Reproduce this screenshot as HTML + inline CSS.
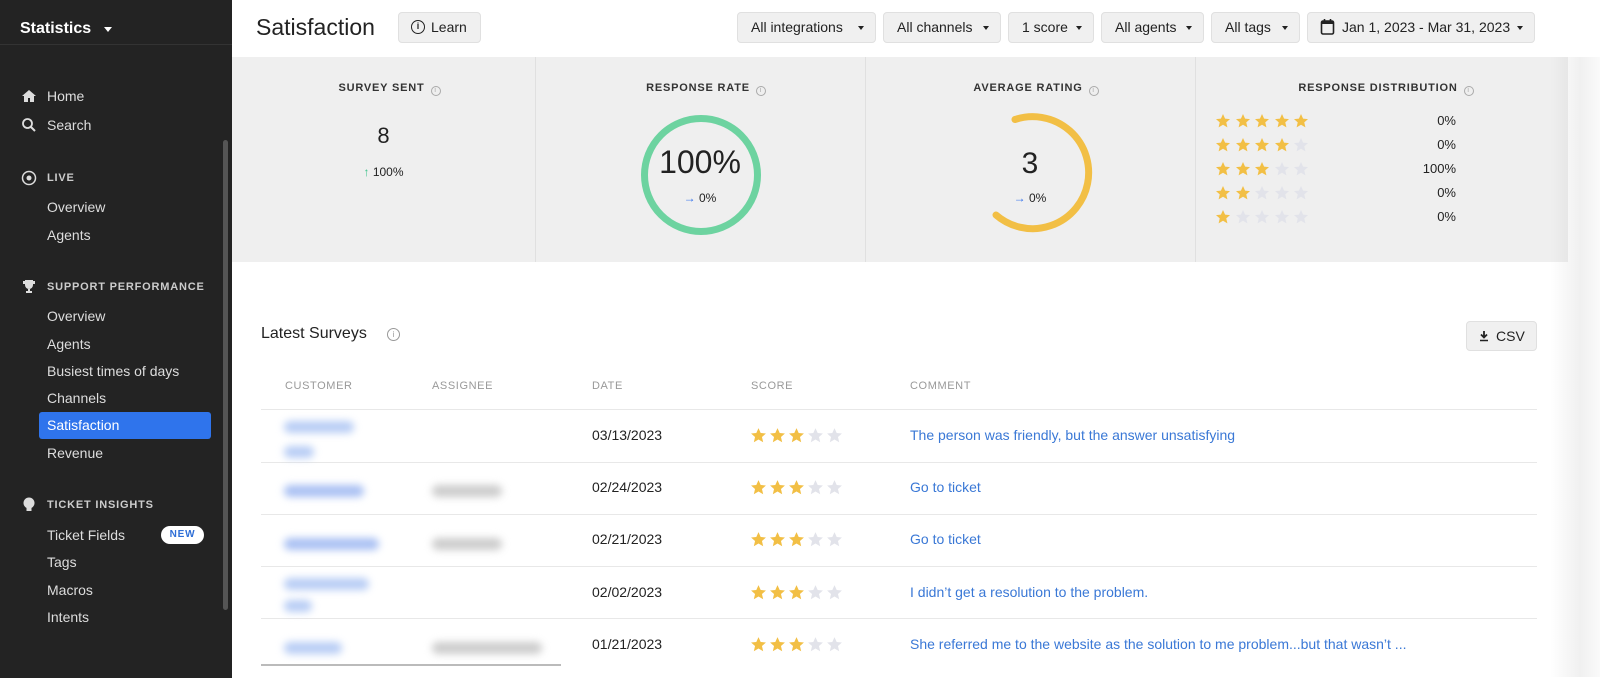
<!DOCTYPE html>
<html><head><meta charset="utf-8"><style>
*{box-sizing:border-box;margin:0;padding:0}
body{width:1600px;height:691px;overflow:hidden;background:#fff;font-family:"Liberation Sans",sans-serif;position:relative;color:#222}
.a{position:absolute}
#sb{left:0;top:0;width:232px;height:678px;background:#232323}
.sbt{color:#fff;font-weight:bold;font-size:16px}
.ni{position:absolute;left:47px;color:#ddd;font-size:14px;line-height:18px}
.sec{position:absolute;left:47px;color:#ccc;font-size:11px;font-weight:bold;letter-spacing:.8px}
.btn{position:absolute;top:12px;height:31px;background:#f0f0f0;border:1px solid #e0e0e0;border-radius:4px;font-size:14px;line-height:29px;padding-left:13px;color:#222}
.btn .c{position:absolute;right:11px;top:13px;border-left:3.5px solid transparent;border-right:3.5px solid transparent;border-top:4px solid #222}
.kt{position:absolute;font-size:11px;font-weight:bold;letter-spacing:.8px;color:#333;top:82px;text-align:center}
.info{display:inline-block;width:10px;height:10px;border:1px solid #aaa;border-radius:50%;vertical-align:-1px;margin-left:6px;font-size:7px;line-height:8px;text-align:center;color:#aaa;font-weight:normal}
.th{position:absolute;top:380px;font-size:11px;color:#999;letter-spacing:.6px}
.hl{position:absolute;left:261px;width:1276px;height:1px;background:#e8e8e8}
.dt{position:absolute;left:592px;font-size:14px;color:#222}
.cm{position:absolute;left:910px;font-size:14px;color:#3a78d6}
.bl{position:absolute;height:12px;border-radius:6px;filter:blur(4px)}
</style></head><body>
<div id="sb" class="a">
 <div class="a sbt" style="left:20px;top:20px">Statistics</div>
 <div class="a" style="left:104px;top:27px;border-left:4px solid transparent;border-right:4px solid transparent;border-top:5px solid #fff"></div>
 <div class="a" style="left:0;top:44px;width:232px;height:1px;background:#333"></div>
 <div class="a" style="left:223px;top:140px;width:5px;height:470px;background:#555;border-radius:3px"></div>
 <svg class="a" style="left:21px;top:88px" width="16" height="16" viewBox="0 0 16 16"><path d="M8 2L1 8h2v6h4v-4h2v4h4V8h2z" fill="#ddd"/></svg>
 <div class="ni" style="top:87px">Home</div>
 <svg class="a" style="left:21px;top:117px" width="16" height="16" viewBox="0 0 16 16"><circle cx="6.5" cy="6.5" r="4.5" stroke="#ddd" stroke-width="1.8" fill="none"/><path d="M10 10l4 4" stroke="#ddd" stroke-width="2"/></svg>
 <div class="ni" style="top:116px">Search</div>
 <svg class="a" style="left:21px;top:170px" width="16" height="16" viewBox="0 0 16 16"><circle cx="8" cy="8" r="6.5" stroke="#ddd" stroke-width="1.5" fill="none"/><circle cx="8" cy="8" r="2.5" fill="#ddd"/></svg>
 <div class="sec" style="top:172px">LIVE</div>
 <div class="ni" style="top:198px">Overview</div>
 <div class="ni" style="top:226px">Agents</div>
 <svg class="a" style="left:22px;top:279px" width="14" height="15" viewBox="0 0 14 15"><path d="M3 1h8v5a4 4 0 0 1-8 0zM1 2h2v3H1zM11 2h2v3h-2zM6 10h2v2h2v2H4v-2h2z" fill="#ddd"/></svg>
 <div class="sec" style="top:281px">SUPPORT PERFORMANCE</div>
 <div class="ni" style="top:307px">Overview</div>
 <div class="ni" style="top:335px">Agents</div>
 <div class="ni" style="top:362px">Busiest times of days</div>
 <div class="ni" style="top:389px">Channels</div>
 <div class="a" style="left:39px;top:412px;width:172px;height:27px;background:#2f74ec;border-radius:3px"></div>
 <div class="ni" style="top:416px;color:#fff">Satisfaction</div>
 <div class="ni" style="top:444px">Revenue</div>
 <svg class="a" style="left:23px;top:497px" width="12" height="16" viewBox="0 0 12 16"><circle cx="6" cy="6" r="5.5" fill="#ddd"/><rect x="3.5" y="11" width="5" height="3" fill="#ddd"/></svg>
 <div class="sec" style="top:499px">TICKET INSIGHTS</div>
 <div class="ni" style="top:526px">Ticket Fields</div>
 <div class="a" style="left:161px;top:526px;width:43px;height:18px;background:#fff;border-radius:9px;color:#2f6fd6;font-size:10px;font-weight:bold;text-align:center;line-height:18px;letter-spacing:.8px">NEW</div>
 <div class="ni" style="top:553px">Tags</div>
 <div class="ni" style="top:581px">Macros</div>
 <div class="ni" style="top:608px">Intents</div>
</div>

<div class="a" style="left:256px;top:14px;font-size:23px;color:#222">Satisfaction</div>
<div class="btn" style="left:398px;width:83px;padding-left:32px">Learn</div>
<div class="a" style="left:411px;top:20px;width:14px;height:14px;border:1.5px solid #222;border-radius:50%;font-size:9px;text-align:center;line-height:11px;font-weight:bold">i</div>
<div class="btn" style="left:737px;width:139px">All integrations<span class="c"></span></div>
<div class="btn" style="left:883px;width:118px">All channels<span class="c"></span></div>
<div class="btn" style="left:1008px;width:86px">1 score<span class="c"></span></div>
<div class="btn" style="left:1101px;width:103px">All agents<span class="c"></span></div>
<div class="btn" style="left:1211px;width:89px">All tags<span class="c"></span></div>
<div class="btn" style="left:1307px;width:228px;padding-left:34px">Jan 1, 2023 - Mar 31, 2023<span class="c"></span></div>
<svg class="a" style="left:1320px;top:18px" width="15" height="18" viewBox="0 0 15 18"><rect x="1.5" y="3" width="12" height="13" rx="1.5" stroke="#222" stroke-width="1.6" fill="none"/><rect x="1.5" y="3" width="12" height="3" fill="#222"/><path d="M4.5 1v3M10.5 1v3" stroke="#222" stroke-width="1.6"/></svg>

<div class="a" style="left:232px;top:57px;width:1336px;height:205px;background:#efefef"></div>
<div class="a" style="left:1550px;top:57px;width:50px;height:620px;background:linear-gradient(90deg,rgba(0,0,0,0),rgba(0,0,0,.06) 60%,rgba(0,0,0,.02))"></div>
<div class="a" style="left:535px;top:57px;width:1px;height:205px;background:#e0e0e0"></div>
<div class="a" style="left:865px;top:57px;width:1px;height:205px;background:#e0e0e0"></div>
<div class="a" style="left:1195px;top:57px;width:1px;height:205px;background:#e0e0e0"></div>

<div class="kt" style="left:232px;width:303px;padding-left:12px">SURVEY SENT<span class="info">i</span></div>
<div class="a" style="left:232px;width:303px;top:123px;text-align:center;font-size:22px">8</div>
<div class="a" style="left:232px;width:303px;top:165px;text-align:center;font-size:12px"><span style="color:#3cc28a">↑</span> 100%</div>

<div class="kt" style="left:535px;width:330px;padding-left:12px">RESPONSE RATE<span class="info">i</span></div>
<svg class="a" style="left:640px;top:114px" width="122" height="122"><circle cx="61" cy="61" r="56.5" stroke="#6dd3a0" stroke-width="7" fill="none"/></svg>
<div class="a" style="left:600px;width:200px;top:144px;text-align:center;font-size:32px">100%</div>
<div class="a" style="left:600px;width:200px;top:191px;text-align:center;font-size:12px"><span style="color:#2f6fed">→</span> 0%</div>

<div class="kt" style="left:865px;width:330px;padding-left:12px">AVERAGE RATING<span class="info">i</span></div>
<svg class="a" style="left:968px;top:112px" width="126" height="126"><path d="M47 7.5 A56 56 0 1 1 28 103" stroke="#f2bf45" stroke-width="7" fill="none" stroke-linecap="round"/></svg>
<div class="a" style="left:930px;width:200px;top:147px;text-align:center;font-size:30px">3</div>
<div class="a" style="left:930px;width:200px;top:191px;text-align:center;font-size:12px"><span style="color:#2f6fed">→</span> 0%</div>

<div class="kt" style="left:1195px;width:370px;padding-left:12px">RESPONSE DISTRIBUTION<span class="info">i</span></div>
<div id="dist"></div>

<div class="a" style="left:261px;top:325px;font-size:16px">Latest Surveys</div>
<div class="a" style="left:387px;top:328px;width:13px;height:13px;border:1.2px solid #999;border-radius:50%;font-size:8px;text-align:center;line-height:11px;color:#999">i</div>
<div class="btn" style="left:1466px;top:321px;height:30px;width:71px;padding-left:29px">CSV</div>
<svg class="a" style="left:1479px;top:330px" width="10" height="12" viewBox="0 0 10 12"><path d="M5 1v6M2 4.5l3 3 3-3" stroke="#222" stroke-width="1.8" fill="none"/><path d="M1 10.5h8" stroke="#222" stroke-width="1.5"/></svg>

<div class="th" style="left:285px">CUSTOMER</div>
<div class="th" style="left:432px">ASSIGNEE</div>
<div class="th" style="left:592px">DATE</div>
<div class="th" style="left:751px">SCORE</div>
<div class="th" style="left:910px">COMMENT</div>
<div class="hl" style="top:409px"></div>
<div class="hl" style="top:462px"></div>
<div class="hl" style="top:514px"></div>
<div class="hl" style="top:566px"></div>
<div class="hl" style="top:618px"></div>
<div class="a" style="left:261px;top:664px;width:300px;height:2px;background:#bbb"></div>

<div class="dt" style="top:427px">03/13/2023</div>
<div class="dt" style="top:479px">02/24/2023</div>
<div class="dt" style="top:531px">02/21/2023</div>
<div class="dt" style="top:584px">02/02/2023</div>
<div class="dt" style="top:636px">01/21/2023</div>
<div class="cm" style="top:427px">The person was friendly, but the answer unsatisfying</div>
<div class="cm" style="top:479px">Go to ticket</div>
<div class="cm" style="top:531px">Go to ticket</div>
<div class="cm" style="top:584px">I didn’t get a resolution to the problem.</div>
<div class="cm" style="top:636px">She referred me to the website as the solution to me problem...but that wasn’t ...</div>

<div class="bl" style="left:284px;top:421px;width:70px;background:#b8cdf5"></div>
<div class="bl" style="left:284px;top:446px;width:30px;background:#b8cdf5"></div>
<div class="bl" style="left:284px;top:485px;width:80px;background:#a9c0f3"></div>
<div class="bl" style="left:432px;top:485px;width:70px;background:#ccc"></div>
<div class="bl" style="left:284px;top:538px;width:95px;background:#a9c0f3"></div>
<div class="bl" style="left:432px;top:538px;width:70px;background:#ccc"></div>
<div class="bl" style="left:284px;top:578px;width:85px;background:#b8cdf5"></div>
<div class="bl" style="left:284px;top:600px;width:28px;background:#b8cdf5"></div>
<div class="bl" style="left:284px;top:642px;width:58px;background:#b8cdf5"></div>
<div class="bl" style="left:432px;top:642px;width:110px;background:#ccc"></div>
<div id="ts"></div>
<script>
function star(x,y,s,c){return '<svg class="a" style="left:'+x+'px;top:'+y+'px" width="'+s+'" height="'+s+'" viewBox="0 0 24 24"><path d="M12 1.5l3.1 6.9 7.4.7-5.6 5 1.7 7.4L12 17.6l-6.6 3.9 1.7-7.4-5.6-5 7.4-.7z" fill="'+c+'"/></svg>';}
var Y='#f2bf45',G='#e2e3ea',h='';
[5,4,3,2,1].forEach(function(n,i){var y=113+i*24;for(var k=0;k<5;k++)h+=star(1215+k*19.5,y,16,k<n?Y:G);
h+='<div class="a" style="left:1376px;width:80px;text-align:right;top:'+(y)+'px;font-size:13px">'+(n==3?'100%':'0%')+'</div>';});
document.getElementById('dist').innerHTML=h;h='';
[435,487,539,592,644].forEach(function(c){for(var k=0;k<5;k++)h+=star(750+k*19,c-8,17,k<3?Y:G);});
document.getElementById('ts').innerHTML=h;
</script>
</body></html>
